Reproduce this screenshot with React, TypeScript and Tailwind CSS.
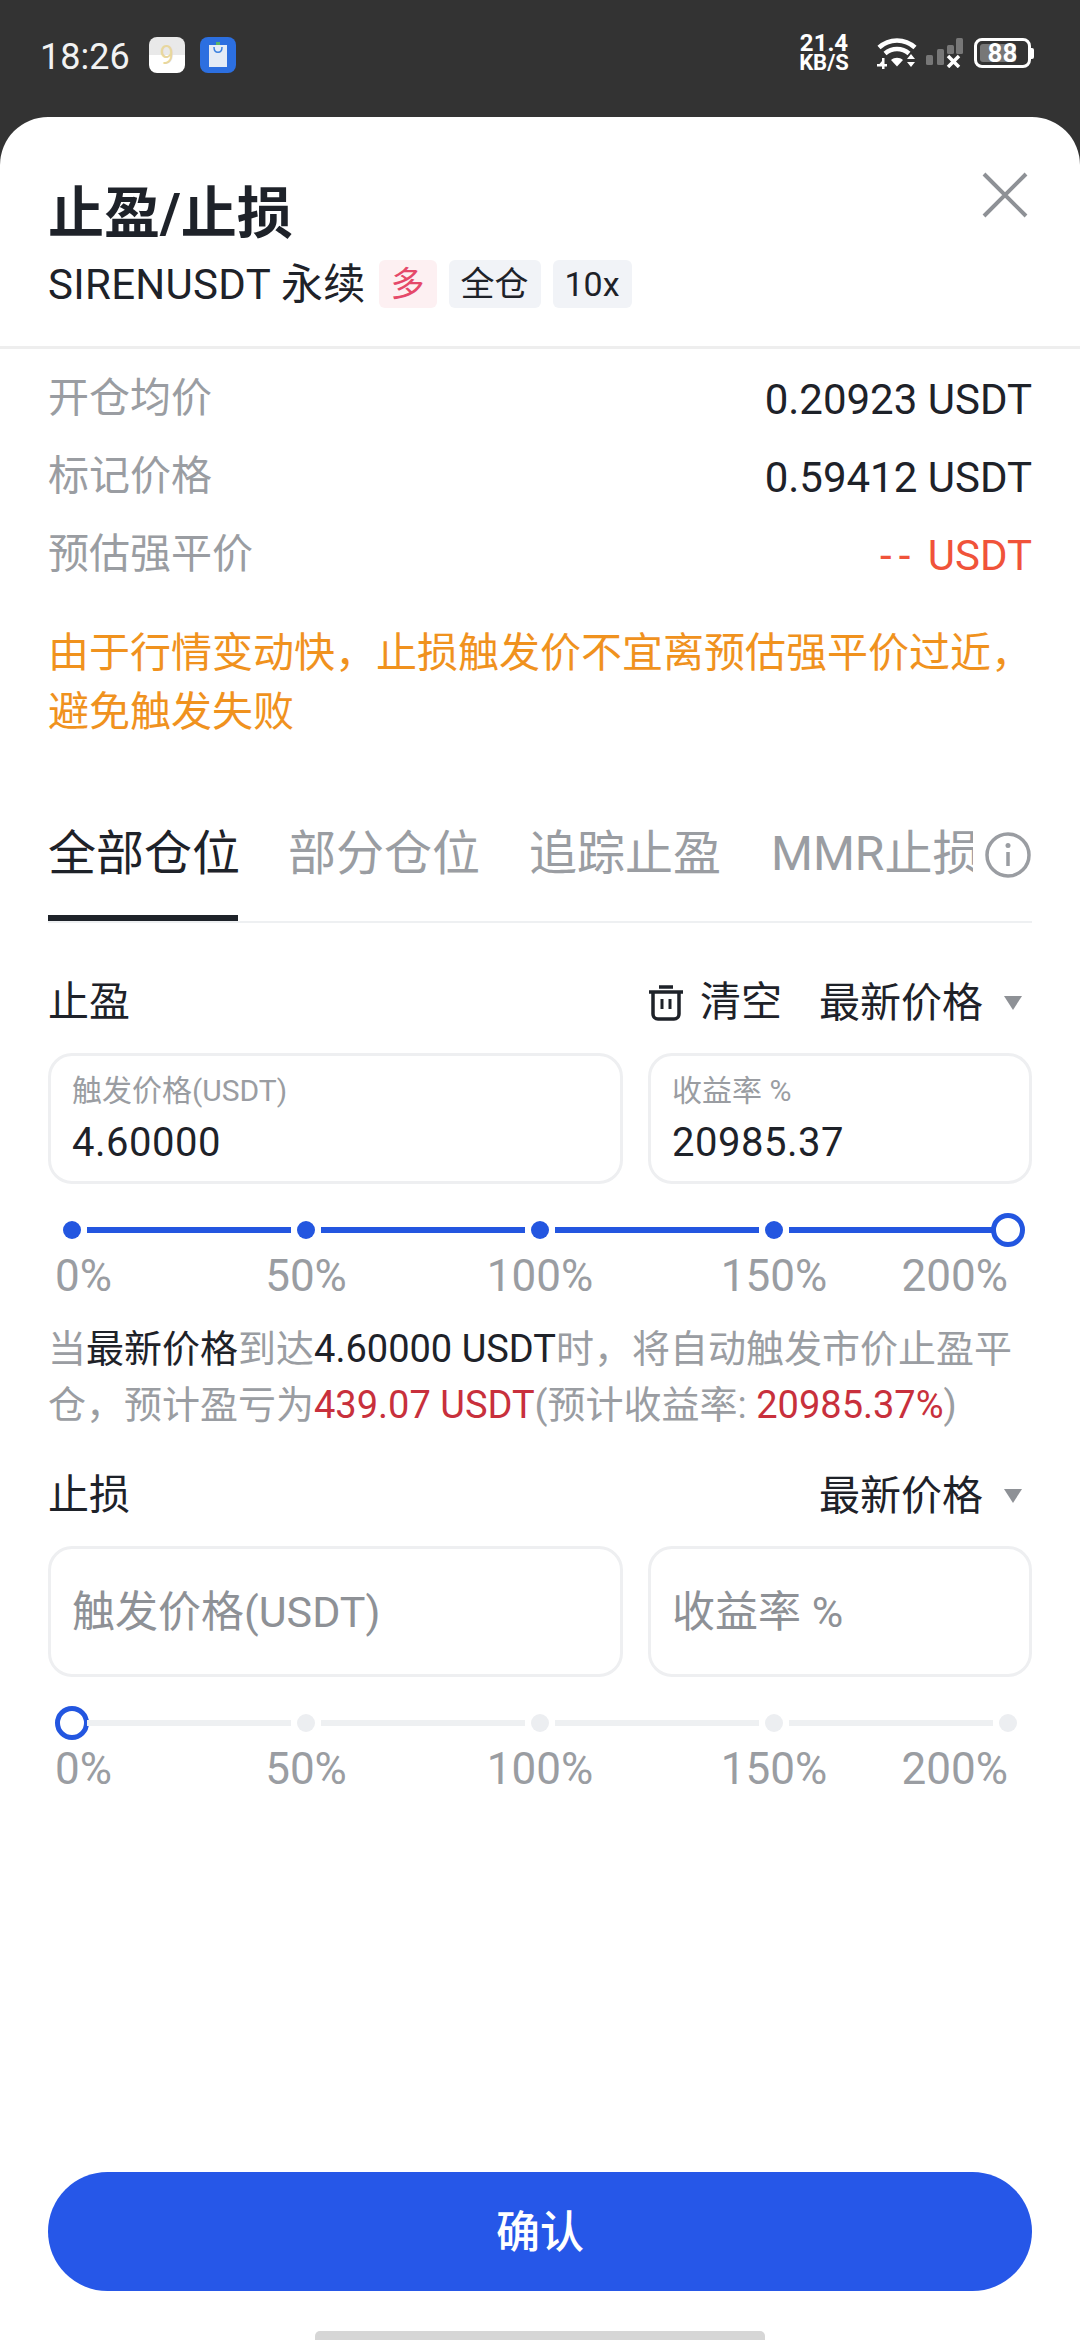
const stops = ['0%', '50%', '100%', '150%', '200%'];

function Caret() {
  return (
    <svg width="20" height="16" viewBox="0 0 20 16" className="ml-[20px] mr-[9px]">
      <path d="M1 1h18l-9 14z" fill="#8e9196" />
    </svg>
  );
}

function PriceType() {
  return (
    <div className="flex items-center text-[41px] leading-[50px] text-[#1e2229]">
      <span>最新价格</span>
      <Caret />
    </div>
  );
}

function InputBox({ label, value, className }: { label: string; value?: string; className: string }) {
  return (
    <div className={`flex h-[131px] flex-col justify-center rounded-[24px] border-[3px] border-[#eeeff1] px-[21px] ${className}`}>
      {value ? (
        <>
          <div className="text-[30px] leading-[40px] text-[#9a9da2]">{label}</div>
          <div className="mt-[8px] text-[40px] leading-[48px] tracking-[0.5px] text-[#1e2229]">{value}</div>
        </>
      ) : (
        <div className="text-[43px] leading-[50px] text-[#8e9196]">{label}</div>
      )}
    </div>
  );
}

function Dot({ on }: { on: boolean }) {
  return <div className={`h-[18px] w-[18px] shrink-0 rounded-full ${on ? 'bg-[#2356e0]' : 'bg-[#eceef1]'}`} />;
}

function Thumb({ className }: { className: string }) {
  return <div className={`h-[34px] w-[34px] shrink-0 rounded-full border-[5px] border-[#2356e0] bg-white ${className}`} />;
}

function Slider({ full }: { full: boolean }) {
  const bar = full ? 'bg-[#2356e0]' : 'bg-[#eef0f2]';
  return (
    <>
      <div className="mx-[15px] mt-[29px] flex h-[34px] items-center gap-[6px]">
        {full ? <Dot on /> : <Thumb className="-mx-[8px]" />}
        {[0, 1, 2, 3].map((i) => (
          <div key={i} className="contents">
            <div className={`h-[6px] flex-1 ${bar}`} />
            {i < 3 ? <Dot on={full} /> : full ? <Thumb className="-mx-[8px]" /> : <Dot on={false} />}
          </div>
        ))}
      </div>
      <div className="ml-[7px] mr-[24px] mt-[4px] grid grid-cols-[134px_234px_234px_234px_1fr] text-[44px] leading-[50px] text-[#9a9da2]">
        {stops.map((s, i) => (
          <div key={s} className={i === 0 ? 'text-left' : i === 4 ? 'text-right' : 'text-center'}>
            {s}
          </div>
        ))}
      </div>
    </>
  );
}

function WifiIcon() {
  return (
    <svg width="42" height="34" viewBox="0 0 42 34" fill="none" className="ml-[25px]">
      <path d="M3 11.500C13 2 29 2 39 11.500" stroke="#fff" strokeWidth="4.500" />
      <path d="M9 17.500C16 11.500 26 11.500 33 17.500" stroke="#fff" strokeWidth="4.500" />
      <path d="M15 24c3.500-3 8.500-3 12 0l-6 6.500z" fill="#fff" />
      <path d="M35 18l4 5h-8zM35 31l4-5h-8z" fill="#fff" />
      <path d="M6 22v6H1v2.500h5V33h2.500v-2.500H11V28H8.500v-6zM3.500 28L6 25v3z" fill="#fff" />
    </svg>
  );
}

function SignalIcon() {
  return (
    <svg width="38" height="30" viewBox="0 0 38 30" className="ml-[8px]">
      <rect x="0" y="17" width="7" height="10" rx="1.500" fill="#777" />
      <rect x="11" y="11" width="7" height="16" rx="1.500" fill="#777" />
      <rect x="21" y="7" width="7" height="9" rx="1.500" fill="#777" />
      <rect x="30" y="0" width="7" height="16" rx="1.500" fill="#777" />
      <path d="M22 18l11 11M33 18L22 29" stroke="#fff" strokeWidth="3.500" />
    </svg>
  );
}

function Battery() {
  return (
    <div className="ml-[10px] flex items-center">
      <div className="relative flex h-[30px] w-[57px] items-center justify-center rounded-[8px] border-[3px] border-white p-[3px]">
        <div className="absolute bottom-[3px] left-[3px] top-[3px] w-[36px] rounded-[3px] bg-[#777]" />
        <span className="relative text-[26px] font-bold leading-none text-white">88</span>
      </div>
      <div className="h-[11px] w-[3px] rounded-r-[2px] bg-white" />
    </div>
  );
}

function StatusBar() {
  return (
    <div className="flex h-[117px] shrink-0 items-start bg-[#333333] pl-[40px] pr-[46px] pt-[33px] text-white">
      <span className="w-[109px] text-[36px] leading-[48px] text-[#f2f2f2]">18:26</span>
      <div className="mt-[4px] flex h-[36px] w-[36px] items-center justify-center rounded-[8px] bg-gradient-to-b from-[#e9e9e9] from-50% to-white to-50% text-[26px] leading-none text-[#e8d79e]">
        9
      </div>
      <div className="ml-[15px] mt-[4px] flex h-[36px] w-[36px] items-center justify-center rounded-[8px] bg-[#2c6fe0]">
        <svg width="20" height="26" viewBox="0 0 20 26">
          <path d="M1 3h18v22H1z" fill="#e4ecf6" />
          <path d="M6 5c0 7 8 7 8 0" fill="none" stroke="#3b82e0" strokeWidth="1.500" />
          <path d="M8 0h4v3H8z" fill="#58b368" />
        </svg>
      </div>
      <div className="ml-auto flex items-center">
        <div className="flex w-[54px] flex-col items-center text-[22px] font-bold leading-[20px]">
          <span className="text-[24px]">21.4</span>
          <span>KB/S</span>
        </div>
        <WifiIcon />
        <SignalIcon />
        <Battery />
      </div>
    </div>
  );
}

function Tabs() {
  return (
    <div className="mt-[82px] flex h-[99px] border-b-[2px] border-[#eef0f2] text-[48px] leading-[60px]">
      <div className="h-[97px] w-[190px] shrink-0 whitespace-nowrap border-b-[6px] border-[#1e2229] text-[#1e2229]">全部仓位</div>
      <div className="ml-[50px] w-[190px] shrink-0 whitespace-nowrap text-[#9a9da2]">部分仓位</div>
      <div className="ml-[51px] w-[190px] shrink-0 whitespace-nowrap text-[#9a9da2]">追踪止盈</div>
      <div className="ml-[52px] h-[60px] w-[202px] shrink-0 overflow-hidden whitespace-nowrap text-[#9a9da2]">MMR止损</div>
      <svg width="46" height="46" viewBox="0 0 46 46" fill="none" className="ml-[12px] mt-[8px] shrink-0">
        <circle cx="23" cy="23" r="21" stroke="#9a9da2" strokeWidth="3.500" />
        <path d="M23 20v14" stroke="#9a9da2" strokeWidth="3.500" />
        <circle cx="23" cy="13.500" r="2.500" fill="#9a9da2" />
      </svg>
    </div>
  );
}

export default function App() {
  return (
    <div className="flex h-[2340px] w-[1080px] flex-col overflow-hidden bg-[#333333] font-['Roboto','Noto_Sans_CJK_SC',sans-serif]">
      <StatusBar />
      <div className="flex flex-1 flex-col rounded-t-[48px] bg-white">
        <div className="h-[232px] border-b-[3px] border-[#eeeeee] px-[48px] pt-[67px]">
          <div className="flex items-start justify-between">
            <h1 className="text-[56px] font-bold leading-[60px] text-[#1e2229]">止盈/止损</h1>
            <svg width="46" height="46" viewBox="0 0 46 46" className="-mt-[12px] mr-[4px]" fill="none">
              <path d="M2 2l42 42M44 2L2 44" stroke="#8e9196" strokeWidth="4" />
            </svg>
          </div>
          <div className="mt-[16px] flex h-[48px] items-center text-[#1e2229]">
            <span className="whitespace-nowrap text-[42px] tracking-[0.3px]">SIRENUSDT 永续</span>
            <span className="ml-[13px] flex h-[48px] w-[58px] items-center justify-center rounded-[6px] bg-[#fdf0f2] text-[34px] text-[#e5496a]">多</span>
            <span className="ml-[12px] flex h-[48px] w-[92px] items-center justify-center rounded-[6px] bg-[#f1f3f7] text-[34px]">全仓</span>
            <span className="ml-[12px] flex h-[48px] w-[79px] items-center justify-center rounded-[6px] bg-[#f1f3f7] text-[34px]">10x</span>
          </div>
        </div>

        <div className="flex flex-1 flex-col px-[48px] pt-[11px]">
          {[
            ['开仓均价', '0.20923', ' USDT', 'text-[#1e2229]'],
            ['标记价格', '0.59412', ' USDT', 'text-[#1e2229]'],
            ['预估强平价', '--', ' USDT', 'text-[#f0533a]'],
          ].map(([label, num, unit, color]) => (
            <div key={label} className="flex h-[78px] items-center justify-between">
              <span className="text-[41px] text-[#9a9da2]">{label}</span>
              <span className={`text-[42px] ${color}`}>
                <span className={num === '--' ? 'tracking-[7px]' : ''}>{num}</span>
                {unit}
              </span>
            </div>
          ))}

          <p className="mt-[30px] text-[41px] leading-[59px] text-[#f0921e]">
            由于行情变动快，止损触发价不宜离预估强平价过近，避免触发失败
          </p>

          <Tabs />

          <div className="mt-[55px] flex h-[50px] items-center justify-between text-[41px] text-[#1e2229]">
            <span>止盈</span>
            <div className="flex items-center">
              <svg width="38" height="36" viewBox="0 0 38 36" fill="none" className="mr-[15px]">
                <path d="M2 7h34M12 2h14" stroke="#1e2229" strokeWidth="3.500" />
                <path d="M6 7v22a5 5 0 0 0 5 5h16a5 5 0 0 0 5-5V7" stroke="#1e2229" strokeWidth="3.500" />
                <path d="M15 14v10M23 14v10" stroke="#1e2229" strokeWidth="3" />
              </svg>
              <span className="mr-[37px]">清空</span>
              <PriceType />
            </div>
          </div>
          <div className="mt-[25px] flex gap-[25px]">
            <InputBox label="触发价格(USDT)" value="4.60000" className="w-[575px]" />
            <InputBox label="收益率 %" value="20985.37" className="flex-1" />
          </div>
          <Slider full />
          <p className="mt-[20px] text-[38px] leading-[56px] text-[#9a9da2]">
            当<span className="text-[#1e2229]">最新价格</span>到达<span className="text-[#1e2229]">4.60000 USDT</span>时，将自动触发市价止盈平仓，预计盈亏为
            <span className="text-[#c8303c]">439.07 USDT</span>(预计收益率: <span className="text-[#c8303c]">20985.37%</span>)
          </p>

          <div className="mt-[38px] flex h-[50px] items-center justify-between text-[41px] text-[#1e2229]">
            <span>止损</span>
            <PriceType />
          </div>
          <div className="mt-[25px] flex gap-[25px]">
            <InputBox label="触发价格(USDT)" className="w-[575px]" />
            <InputBox label="收益率 %" className="flex-1" />
          </div>
          <Slider full={false} />

          <button className="mt-auto h-[119px] w-full rounded-full bg-[#2657e8] pt-[2px] text-[44px] font-medium text-white">确认</button>
          <div className="mx-auto mt-[40px] h-[9px] w-[450px] rounded-t-[5px] bg-[#d6d6d6]" />
        </div>
      </div>
    </div>
  );
}
